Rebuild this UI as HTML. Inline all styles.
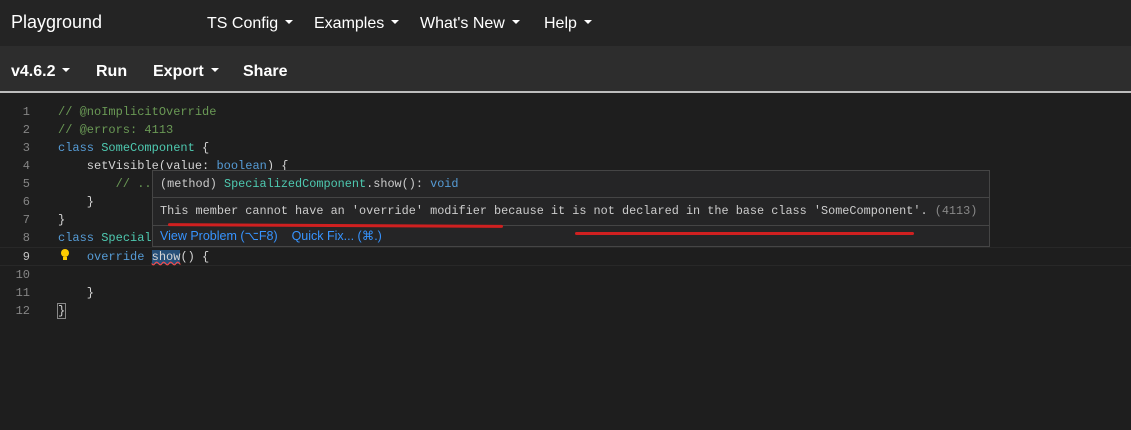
<!DOCTYPE html>
<html><head><style>
body{margin:0;width:1131px;height:430px;background:#1e1e1e;overflow:hidden;font-family:"Liberation Sans",sans-serif;position:relative}
.top{position:absolute;left:0;top:0;width:1131px;height:46px;background:#242424;color:#fff}
.top span{position:absolute;top:15px;font-size:16px;line-height:18px}
.bar2{position:absolute;left:0;top:46px;width:1131px;height:45px;background:#2d2d2d;color:#fff;border-bottom:2px solid #bdbdbd}
.bar2 span{position:absolute;top:17px;font-size:16px;line-height:18px;font-weight:bold}
i.car{display:inline-block;width:0;height:0;border-left:4px solid transparent;border-right:4px solid transparent;border-top:4px solid #fff;vertical-align:4px;margin-left:7px}
.code{position:absolute;left:0;top:105px;font-family:"Liberation Mono",monospace;font-size:12px;line-height:14px}
.ln{position:absolute;width:30px;text-align:right;color:#858585;left:0}
.tx{position:absolute;left:58px;white-space:pre;color:#d4d4d4}
.c{color:#6a9955}.k{color:#569cd6}.t{color:#4ec9b0}
.tip{position:absolute;left:152px;top:170px;width:836px;height:75px;background:#252526;border:1px solid #454545;font-family:"Liberation Mono",monospace;font-size:11.85px;color:#ccc}
.tip div{position:absolute;left:7px;white-space:pre}
</style></head><body>
<div class="top">
<span style="left:11px;font-size:18px;top:11px;line-height:22px">Playground</span>
<span style="left:207px">TS Config<i class="car"></i></span>
<span style="left:314px">Examples<i class="car"></i></span>
<span style="left:420px">What's New<i class="car"></i></span>
<span style="left:544px">Help<i class="car"></i></span>
</div>
<div class="bar2">
<span style="left:11px">v4.6.2<i class="car"></i></span>
<span style="left:96px">Run</span>
<span style="left:153px">Export<i class="car"></i></span>
<span style="left:243px">Share</span>
</div>
<div style="position:absolute;left:0;top:247px;width:1131px;height:17px;border-top:1px solid #282828;border-bottom:1px solid #282828"></div>
<div class="code">
<div class="ln" style="top:0">1</div><div class="tx" style="top:0"><span class="c">// @noImplicitOverride</span></div>
<div class="ln" style="top:18px">2</div><div class="tx" style="top:18px"><span class="c">// @errors: 4113</span></div>
<div class="ln" style="top:36px">3</div><div class="tx" style="top:36px"><span class="k">class</span> <span class="t">SomeComponent</span> {</div>
<div class="ln" style="top:54px">4</div><div class="tx" style="top:54px">    setVisible(value: <span class="k">boolean</span>) {</div>
<div class="ln" style="top:72px">5</div><div class="tx" style="top:72px">        <span class="c">// ...</span></div>
<div class="ln" style="top:90px">6</div><div class="tx" style="top:90px">    }</div>
<div class="ln" style="top:108px">7</div><div class="tx" style="top:108px">}</div>
<div class="ln" style="top:126px">8</div><div class="tx" style="top:126px"><span class="k">class</span> <span class="t">Special</span></div>
<div class="ln" style="top:145px;color:#c6c6c6">9</div><div class="tx" style="top:145px">    <span class="k">override</span> <span style="background:#264f78;text-decoration:underline wavy #f14c4c">show</span>() {</div>
<div class="ln" style="top:163px">10</div>
<div class="ln" style="top:181px">11</div><div class="tx" style="top:181px">    }</div>
<div class="ln" style="top:199px">12</div><div class="tx" style="top:199px"><span style="outline:1px solid #888">}</span></div>
</div>
<div style="position:absolute;left:61px;top:249px;width:8px;height:8px;border-radius:50%;background:#ffcc00"></div>
<div style="position:absolute;left:63px;top:257px;width:4px;height:3px;background:#ffcc00"></div>
<div class="tip">
<div style="top:6px">(method) <span class="t">SpecializedComponent</span>.show(): <span class="k">void</span></div>
<div style="top:26px;left:0;width:836px;height:27px;border-top:1px solid #454545;border-bottom:1px solid #454545"></div>
<div style="top:33px">This member cannot have an 'override' modifier because it is not declared in the base class 'SomeComponent'. <span style="color:#888">(4113)</span></div>
<div style="top:57px;font-family:'Liberation Sans',sans-serif;font-size:12.5px;color:#3794ff">View Problem (⌥F8)    Quick Fix... (⌘.)</div>
</div>
<div style="position:absolute;left:168px;top:224px;width:335px;height:3px;background:#d02020;border-radius:2px;transform:rotate(0.3deg)"></div>
<div style="position:absolute;left:575px;top:232px;width:339px;height:3px;background:#d02020;border-radius:2px"></div>
</body></html>
